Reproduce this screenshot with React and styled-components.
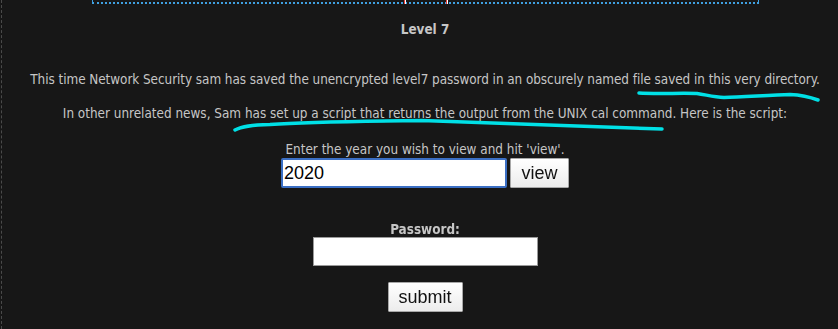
import React from "react"
import styled, { createGlobalStyle } from "styled-components"

const GlobalStyle = createGlobalStyle`
  html, body {
    margin: 0;
    padding: 0;
    background: #171717;
    overflow: hidden;
  }
`

const Page = styled.div`
  position: relative;
  min-height: 329px;
  margin-left: 1px;
  border-left: 1px dashed #4a4a4a;
  padding-left: 10px;
  box-sizing: border-box;
  font-family: "DejaVu Sans Condensed", "DejaVu Sans", sans-serif;
  font-size: 13.4px;
  color: #c6c6c6;
  display: flex;
  flex-direction: column;
  align-items: center;
`

const TopStrip = styled.div`
  position: relative;
  width: 665px;
  height: 2px;
  border: 1px dotted #3fa0e0;
  border-top: none;
  border-bottom: 2px dotted #3fa0e0;
`

const Tick = styled.span`
  position: absolute;
  top: 0;
  left: ${p => p.$left}px;
  width: 2px;
  height: 4px;
  background: linear-gradient(to right, #e84040 50%, #ffffff 50%);
`

const Title = styled.h3`
  margin: 18px 0 0;
  font-size: 13.4px;
  font-weight: bold;
  line-height: 16px;
`

const Para = styled.p`
  margin: ${p => p.$top}px 0 0;
  line-height: 16px;
  white-space: nowrap;
  letter-spacing: ${p => p.$tight || 0}px;
`

const Row = styled.div`
  display: flex;
  gap: 3px;
  align-items: center;
`

const TextInput = styled.input`
  box-sizing: border-box;
  width: ${p => p.$w}px;
  height: ${p => p.$h}px;
  margin: 0;
  padding: 0 1px;
  background: #fff;
  border: ${p => (p.$focus ? "2px solid #3b6fc4" : "1px solid #9a9a9a")};
  border-radius: ${p => (p.$focus ? "2px" : "0")};
  font-family: "Liberation Sans", Arial, sans-serif;
  font-size: 18px;
  color: #000;
  outline: none;
  caret-color: #000;
`

const Button = styled.button`
  box-sizing: border-box;
  height: 30px;
  width: ${p => p.$w}px;
  margin: 0;
  padding: 0;
  background: linear-gradient(#ffffff, #ececec);
  border: 1px solid #a8a8a8;
  border-radius: 1px;
  font-family: "Liberation Sans", Arial, sans-serif;
  font-size: 18px;
  color: #111;
`

const Label = styled.div`
  margin-top: ${p => p.$top}px;
  line-height: 16px;
  font-weight: ${p => (p.$bold ? "bold" : "normal")};
  white-space: nowrap;
`

const Marks = styled.svg`
  position: absolute;
  left: 0;
  top: 0;
  pointer-events: none;
`

export default function App() {
  return (
    <>
      <GlobalStyle />
      <Page>
        <TopStrip>
          <Tick $left={311} />
          <Tick $left={353} />
        </TopStrip>
        <Title>Level 7</Title>
        <Para $top={34} $tight={-0.05}>
          This time Network Security sam has saved the unencrypted level7 password in an obscurely named file saved in this very directory.
        </Para>
        <Para $top={18}>
          In other unrelated news, Sam has set up a script that returns the output from the UNIX cal command. Here is the script:
        </Para>
        <Label $top={20}>Enter the year you wish to view and hit 'view'.</Label>
        <Row>
          <TextInput $w={226} $h={30} $focus defaultValue="2020" autoFocus />
          <Button $w={59}>view</Button>
        </Row>
        <Label $top={34} $bold>Password:</Label>
        <TextInput type="password" $w={225} $h={29} style={{ marginTop: -1 }} />
        <Button $w={75} style={{ marginTop: 16 }}>submit</Button>
        <Marks width="838" height="329" viewBox="0 0 838 329">
          <path
            d="M637 93 C650 94 680 93 695 93.5 C705 95 712 97 722 97.5 C740 97 770 95 788 94.5 C800 95 808 97 816 100"
            fill="none"
            stroke="#00e0e6"
            strokeWidth="3.5"
            strokeLinecap="round"
          />
          <path
            d="M233 130 C240 126 250 125 268 124.5 C300 122 360 121 420 120.5 C480 122 560 125.5 660 129"
            fill="none"
            stroke="#00e0e6"
            strokeWidth="3.5"
            strokeLinecap="round"
          />
        </Marks>
      </Page>
    </>
  )
}
